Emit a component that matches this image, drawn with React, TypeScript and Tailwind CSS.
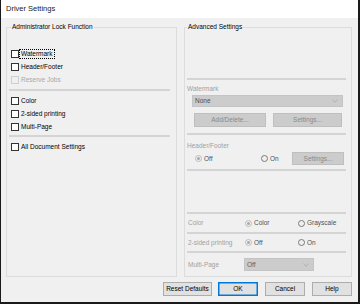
import React from "react";

const font = { fontFamily: '"Liberation Sans", Arial, sans-serif' };

function Check({ label, disabled, focus }: { label: string; disabled?: boolean; focus?: boolean }) {
  return (
    <div className="flex h-[13px] items-center pl-[4px]">
      <span
        className={
          disabled
            ? "h-[8px] w-[8px] border border-[#cfcfcf] bg-[#f0f0f0]"
            : "h-[8px] w-[8px] border border-[#333333] bg-white"
        }
      />
      <span
        className={
          (disabled ? "text-[#a8a8a8] " : "text-[#000000] ") +
          (focus ? "ml-[1px] px-[1px] outline outline-1 outline-dotted outline-[#000]" : "ml-[2px]") +
          " leading-[8px]"
        }
      >
        {label}
      </span>
    </div>
  );
}

function Radio({ label, selected, width }: { label: string; selected?: boolean; width: string }) {
  return (
    <div className={"flex items-center " + width}>
      <span
        className={
          selected
            ? "flex h-[7px] w-[7px] items-center justify-center rounded-full border border-[#bcbcbc]"
            : "flex h-[7px] w-[7px] items-center justify-center rounded-full border border-[#7a7a7a] bg-[#f0f0f0]"
        }
      >
        {selected && <span className="h-[3px] w-[3px] rounded-full bg-[#a8a8a8]" />}
      </span>
      <span className="ml-[2px] text-[#505050]">{label}</span>
    </div>
  );
}

function Sep({ cls }: { cls: string }) {
  return <div className={"h-[2px] bg-[#d4d4d4] " + cls} />;
}

function DisBtn({ label, cls }: { label: string; cls: string }) {
  return (
    <div className={"flex items-center justify-center border border-[#bfbfbf] bg-[#cccccc] text-[#8a8a8a] " + cls}>
      {label}
    </div>
  );
}

function Chevron() {
  return (
    <svg width="6" height="4" viewBox="0 0 6 4" className="shrink-0">
      <path d="M0.5 0.8 L3 3.2 L5.5 0.8" fill="none" stroke="#a8a8a8" strokeWidth="0.8" />
    </svg>
  );
}

function Btn({ label, cls, primary }: { label: string; cls: string; primary?: boolean }) {
  return (
    <div
      className={
        "flex h-[14px] items-center justify-center bg-[#e1e1e1] text-black " +
        (primary ? "border border-[#0078d7] shadow-[inset_0_0_0_0.5px_#0078d7] " : "border border-[#adadad] ") +
        cls
      }
    >
      {label}
    </div>
  );
}

export default function App() {
  return (
    <div
      className="flex h-[304px] w-[360px] flex-col border-b-2 border-l border-r-2 border-[#1a1a1a] bg-[#f0f0f0] text-[6.5px] leading-[8px]"
      style={font}
    >
      <div className="flex h-[18px] shrink-0 items-center bg-white pl-[5px] text-[7.5px] text-[#1a1a1a]">
        Driver Settings
      </div>
      <div className="flex gap-[7px] pl-[5px] pr-[6px] pt-[5px]">
        <fieldset className="w-[171px] border border-[#dcdcdc]">
          <legend className="ml-[4px] px-[1px] leading-[8px] text-black">Administrator Lock Function</legend>
          <div className="pt-[16px]">
            <Check label="Watermark" focus />
            <Check label="Header/Footer" />
            <Check label="Reserve Jobs" disabled />
            <Sep cls="ml-[2px] mt-[3px] w-[161px]" />
            <div className="mt-[3px]">
              <Check label="Color" />
              <Check label="2-sided printing" />
              <Check label="Multi-Page" />
            </div>
            <Sep cls="ml-[2px] mt-[2px] w-[161px]" />
            <div className="mt-[3px]">
              <Check label="All Document Settings" />
            </div>
          </div>
        </fieldset>
        <fieldset className="w-[168px] border border-[#dcdcdc] pb-[5px]">
          <legend className="ml-[2px] px-[1px] leading-[8px] text-black">Advanced Settings</legend>
          <Sep cls="ml-[2px] mt-[47px] w-[159px]" />
          <div className="mt-[4px] flex h-[10px] items-center pl-[2px] text-[#a0a0a0]">Watermark</div>
          <div className="ml-[7px] mt-[1px] flex h-[12px] w-[151px] items-center justify-between border border-[#c4c4c4] bg-[#cccccc] pl-[2px] pr-[4px] text-[#505050]">
            <span>None</span>
            <Chevron />
          </div>
          <div className="ml-[9px] mt-[6px] flex h-[14px] gap-[7px]">
            <DisBtn label="Add/Delete..." cls="w-[72px]" />
            <DisBtn label="Settings..." cls="w-[69px]" />
          </div>
          <Sep cls="ml-[2px] mt-[6px] w-[159px]" />
          <div className="mt-[6px] flex h-[10px] items-center pl-[2px] text-[#a0a0a0]">Header/Footer</div>
          <div className="mt-[1px] flex h-[13px] items-center pl-[10px]">
            <Radio label="Off" selected width="w-[66px]" />
            <Radio label="On" width="w-[31px]" />
            <DisBtn label="Settings..." cls="h-[13px] w-[52px]" />
          </div>
          <Sep cls="ml-[2px] mt-[4px] w-[159px]" />
          <Sep cls="ml-[2px] mt-[41px] w-[159px]" />
          <div className="flex h-[18px] items-center pl-[3px]">
            <span className="w-[57px] text-[#a0a0a0]">Color</span>
            <Radio label="Color" selected width="w-[53px]" />
            <Radio label="Grayscale" width="w-[48px]" />
          </div>
          <Sep cls="ml-[2px] w-[159px]" />
          <div className="flex h-[17px] items-center pl-[3px]">
            <span className="w-[57px] text-[#a0a0a0]">2-sided printing</span>
            <Radio label="Off" selected width="w-[53px]" />
            <Radio label="On" width="w-[48px]" />
          </div>
          <Sep cls="ml-[2px] w-[159px]" />
          <div className="mt-[5px] flex h-[13px] items-center pl-[3px]">
            <span className="w-[56px] text-[#a0a0a0]">Multi-Page</span>
            <div className="flex h-[13px] w-[70px] items-center justify-between border border-[#c4c4c4] bg-[#cccccc] pl-[2px] pr-[4px] text-[#606060]">
              <span>Off</span>
              <Chevron />
            </div>
          </div>
        </fieldset>
      </div>
      <div className="mt-[5px] flex justify-end gap-[7px] pr-[6px]">
        <Btn label="Reset Defaults" cls="w-[49px] mr-[-1px]" />
        <Btn label="OK" cls="w-[40px]" primary />
        <Btn label="Cancel" cls="w-[40px]" />
        <Btn label="Help" cls="w-[40px]" />
      </div>
    </div>
  );
}
